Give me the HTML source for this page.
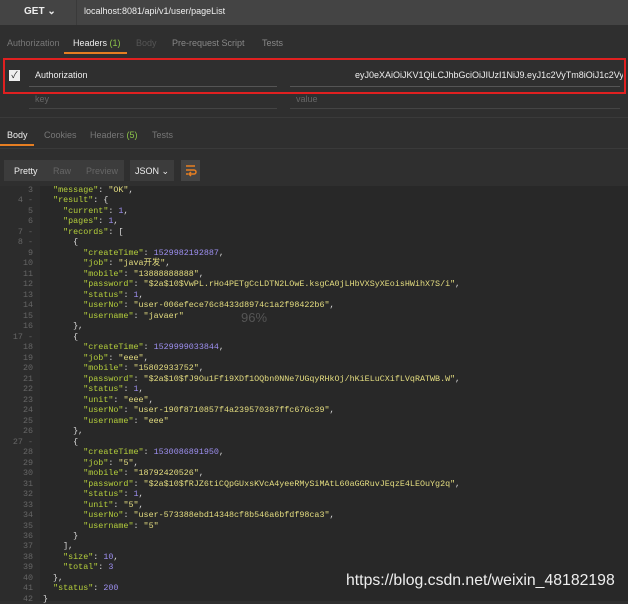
<!DOCTYPE html>
<html><head><meta charset="utf-8"><style>
*{margin:0;padding:0;box-sizing:border-box}
body{width:628px;height:601px;background:#2f2f2f;font-family:"Liberation Sans","Noto Sans CJK SC",sans-serif;position:relative;overflow:hidden;color:#ddd}
.a{position:absolute}
.code{position:absolute;left:0;top:186px;width:628px;height:415px;background:#282828}
.gut{position:absolute;left:0;top:0;width:40px;height:415px;background:#2c2c2c}
pre{font-family:"Liberation Mono","Noto Sans CJK SC",monospace;font-size:8.4px;line-height:10.49px;position:absolute;top:-1px;left:3px;color:#ddd}
.k{color:#b5cf3c}.s{color:#e4dd80}.n{color:#9d8ff0}.ln{color:#666;display:inline-block;width:30px;text-align:right;margin-right:10px}
</style></head><body>
<div class="a" style="left:0;top:0;width:628px;height:25px;background:#444"></div>
<div class="a" style="left:24px;top:6px;font-size:10px;font-weight:bold;color:#eee">GET ⌄</div>
<div class="a" style="left:76px;top:0;width:1px;height:25px;background:#3a3a3a"></div>
<div class="a" style="left:84px;top:6px;font-size:9px;color:#eee">localhost:8081/api/v1/user/pageList</div>
<div class="a" style="left:7px;top:38px;font-size:9px;color:#777">Authorization</div>
<div class="a" style="left:73px;top:38px;font-size:9px;color:#eee">Headers <span style="color:#8bc34a">(1)</span></div>
<div class="a" style="left:64px;top:52px;width:63px;height:2px;background:#e67e22"></div>
<div class="a" style="left:136px;top:38px;font-size:9px;color:#555">Body</div>
<div class="a" style="left:172px;top:38px;font-size:9px;color:#888">Pre-request Script</div>
<div class="a" style="left:262px;top:38px;font-size:9px;color:#888">Tests</div>
<div class="a" style="left:3px;top:58px;width:623px;height:36px;border:2px solid #e02020"></div>
<div class="a" style="left:9px;top:70px;width:11px;height:11px;background:#eee;color:#222;font-size:9px;line-height:11px;text-align:center">✓</div>
<div class="a" style="left:35px;top:70px;font-size:9px;color:#eee">Authorization</div>
<div class="a" style="left:29px;top:86px;width:248px;height:1px;background:#555"></div>
<div class="a" style="left:355px;top:70px;font-size:9px;color:#eee;white-space:nowrap;width:268px;overflow:hidden">eyJ0eXAiOiJKV1QiLCJhbGciOiJIUzI1NiJ9.eyJ1c2VyTm8iOiJ1c2VyLTA</div>
<div class="a" style="left:290px;top:86px;width:330px;height:1px;background:#555"></div>
<div class="a" style="left:35px;top:94px;font-size:9px;color:#666">key</div>
<div class="a" style="left:296px;top:94px;font-size:9px;color:#666">value</div>
<div class="a" style="left:29px;top:108px;width:248px;height:1px;background:#444"></div>
<div class="a" style="left:290px;top:108px;width:330px;height:1px;background:#444"></div>
<div class="a" style="left:0;top:117px;width:628px;height:1px;background:#3a3a3a"></div>
<div class="a" style="left:7px;top:130px;font-size:9px;color:#eee">Body</div>
<div class="a" style="left:0;top:144px;width:34px;height:2px;background:#e67e22"></div>
<div class="a" style="left:44px;top:130px;font-size:9px;color:#777">Cookies</div>
<div class="a" style="left:90px;top:130px;font-size:9px;color:#777">Headers <span style="color:#8bc34a">(5)</span></div>
<div class="a" style="left:152px;top:130px;font-size:9px;color:#777">Tests</div>
<div class="a" style="left:0;top:148px;width:628px;height:1px;background:#3a3a3a"></div>
<div class="a" style="left:4px;top:160px;width:120px;height:21px;background:#3c3c3c"></div>
<div class="a" style="left:14px;top:166px;font-size:9px;color:#eee">Pretty</div>
<div class="a" style="left:53px;top:166px;font-size:9px;color:#666">Raw</div>
<div class="a" style="left:86px;top:166px;font-size:9px;color:#666">Preview</div>
<div class="a" style="left:130px;top:160px;width:44px;height:21px;background:#3c3c3c"></div>
<div class="a" style="left:135px;top:166px;font-size:9px;color:#eee">JSON ⌄</div>
<div class="a" style="left:181px;top:160px;width:19px;height:21px;background:#444"><svg width="19" height="21"><path d="M5 6h9M5 10h8a2 2 0 0 1 0 4h-4M5 14h2M10 12l-2 2 2 2" stroke="#e67e22" stroke-width="1.5" fill="none"/></svg></div>
<div class="code"><div class="gut"></div>
<pre><span class="ln">3</span>  <span class="k">"message"</span>: <span class="s">"OK"</span>,
<span class="ln">4 -</span>  <span class="k">"result"</span>: {
<span class="ln">5</span>    <span class="k">"current"</span>: <span class="n">1</span>,
<span class="ln">6</span>    <span class="k">"pages"</span>: <span class="n">1</span>,
<span class="ln">7 -</span>    <span class="k">"records"</span>: [
<span class="ln">8 -</span>      {
<span class="ln">9</span>        <span class="k">"createTime"</span>: <span class="n">1529982192887</span>,
<span class="ln">10</span>        <span class="k">"job"</span>: <span class="s">"java开发"</span>,
<span class="ln">11</span>        <span class="k">"mobile"</span>: <span class="s">"13888888888"</span>,
<span class="ln">12</span>        <span class="k">"password"</span>: <span class="s">"$2a$10$VwPL.rHo4PETgCcLDTN2LOwE.ksgCA0jLHbVXSyXEoisHWihX7S/i"</span>,
<span class="ln">13</span>        <span class="k">"status"</span>: <span class="n">1</span>,
<span class="ln">14</span>        <span class="k">"userNo"</span>: <span class="s">"user-006efece76c8433d8974c1a2f98422b6"</span>,
<span class="ln">15</span>        <span class="k">"username"</span>: <span class="s">"javaer"</span>
<span class="ln">16</span>      },
<span class="ln">17 -</span>      {
<span class="ln">18</span>        <span class="k">"createTime"</span>: <span class="n">1529999033844</span>,
<span class="ln">19</span>        <span class="k">"job"</span>: <span class="s">"eee"</span>,
<span class="ln">20</span>        <span class="k">"mobile"</span>: <span class="s">"15802933752"</span>,
<span class="ln">21</span>        <span class="k">"password"</span>: <span class="s">"$2a$10$fJ9Ou1Ffi9XDf1OQbn0NNe7UGqyRHkOj/hKiELuCXifLVqRATWB.W"</span>,
<span class="ln">22</span>        <span class="k">"status"</span>: <span class="n">1</span>,
<span class="ln">23</span>        <span class="k">"unit"</span>: <span class="s">"eee"</span>,
<span class="ln">24</span>        <span class="k">"userNo"</span>: <span class="s">"user-190f8710857f4a239570387ffc676c39"</span>,
<span class="ln">25</span>        <span class="k">"username"</span>: <span class="s">"eee"</span>
<span class="ln">26</span>      },
<span class="ln">27 -</span>      {
<span class="ln">28</span>        <span class="k">"createTime"</span>: <span class="n">1530086891950</span>,
<span class="ln">29</span>        <span class="k">"job"</span>: <span class="s">"5"</span>,
<span class="ln">30</span>        <span class="k">"mobile"</span>: <span class="s">"18792420526"</span>,
<span class="ln">31</span>        <span class="k">"password"</span>: <span class="s">"$2a$10$fRJZ6tiCQpGUxsKVcA4yeeRMySiMAtL60aGGRuvJEqzE4LEOuYg2q"</span>,
<span class="ln">32</span>        <span class="k">"status"</span>: <span class="n">1</span>,
<span class="ln">33</span>        <span class="k">"unit"</span>: <span class="s">"5"</span>,
<span class="ln">34</span>        <span class="k">"userNo"</span>: <span class="s">"user-573388ebd14348cf8b546a6bfdf98ca3"</span>,
<span class="ln">35</span>        <span class="k">"username"</span>: <span class="s">"5"</span>
<span class="ln">36</span>      }
<span class="ln">37</span>    ],
<span class="ln">38</span>    <span class="k">"size"</span>: <span class="n">10</span>,
<span class="ln">39</span>    <span class="k">"total"</span>: <span class="n">3</span>
<span class="ln">40</span>  },
<span class="ln">41</span>  <span class="k">"status"</span>: <span class="n">200</span>
<span class="ln">42</span>}</pre>
</div>
<div class="a" style="left:241px;top:310px;font-size:13px;color:#555">96%</div>
<div class="a" style="left:346px;top:572px;font-size:15.8px;color:#eee">https://blog.csdn.net/weixin_48182198</div>
</body></html>
